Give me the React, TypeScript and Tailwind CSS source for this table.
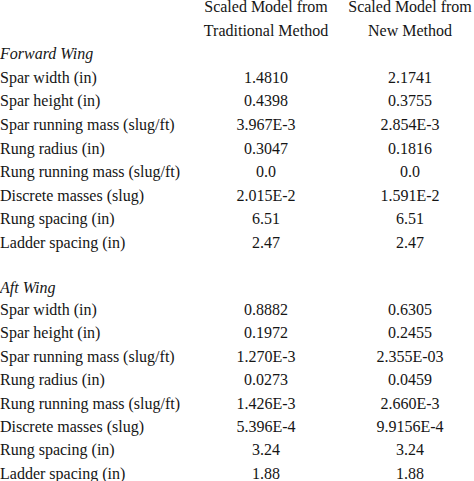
import React from "react";

type Row = { label: string; a: string; b: string };

const forward: Row[] = [
  { label: "Spar width (in)", a: "1.4810", b: "2.1741" },
  { label: "Spar height (in)", a: "0.4398", b: "0.3755" },
  { label: "Spar running mass (slug/ft)", a: "3.967E-3", b: "2.854E-3" },
  { label: "Rung radius (in)", a: "0.3047", b: "0.1816" },
  { label: "Rung running mass (slug/ft)", a: "0.0", b: "0.0" },
  { label: "Discrete masses (slug)", a: "2.015E-2", b: "1.591E-2" },
  { label: "Rung spacing (in)", a: "6.51", b: "6.51" },
  { label: "Ladder spacing (in)", a: "2.47", b: "2.47" },
];

const aft: Row[] = [
  { label: "Spar width (in)", a: "0.8882", b: "0.6305" },
  { label: "Spar height (in)", a: "0.1972", b: "0.2455" },
  { label: "Spar running mass (slug/ft)", a: "1.270E-3", b: "2.355E-03" },
  { label: "Rung radius (in)", a: "0.0273", b: "0.0459" },
  { label: "Rung running mass (slug/ft)", a: "1.426E-3", b: "2.660E-3" },
  { label: "Discrete masses (slug)", a: "5.396E-4", b: "9.9156E-4" },
  { label: "Rung spacing (in)", a: "3.24", b: "3.24" },
  { label: "Ladder spacing (in)", a: "1.88", b: "1.88" },
];

function Line({ label, a, b, italic, h = "h-[23.6px]" }: { label: string; a: string; b: string; italic?: boolean; h?: string }) {
  return (
    <div className={`grid grid-cols-[200px_132px_156px] ${h} items-center`}>
      <div className={italic ? "italic" : ""}>{label}</div>
      <div className="text-center">{a}</div>
      <div className="text-center">{b}</div>
    </div>
  );
}

export default function App() {
  return (
    <div className="w-[474px] h-[481px] overflow-hidden bg-white">
      <div
        className="-mt-[5px] text-[16px] leading-[23.6px] text-[#151515] whitespace-nowrap"
        style={{ fontFamily: '"Liberation Serif", "Times New Roman", serif' }}
      >
        <Line label="" a="Scaled Model from" b="Scaled Model from" />
        <Line label="" a="Traditional Method" b="New Method" />
        <Line label="Forward Wing" a="" b="" italic />
        {forward.map((r, i) => (
          <Line key={"f" + i} {...r} />
        ))}
        <div className="h-[21px]" />
        <Line label="Aft Wing" a="" b="" italic h="h-[22.5px]" />
        {aft.map((r, i) => (
          <Line key={"a" + i} {...r} h="h-[23.4px]" />
        ))}
      </div>
    </div>
  );
}
